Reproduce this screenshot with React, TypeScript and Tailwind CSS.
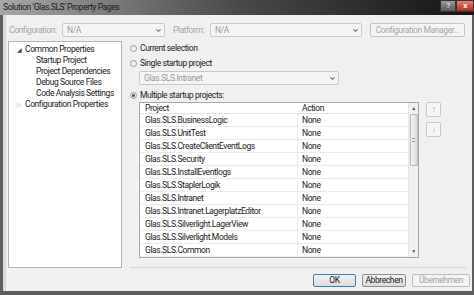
import { ChevronDown } from 'lucide-react'

const projects = [
  'Glas.SLS.BusinessLogic',
  'Glas.SLS.UnitTest',
  'Glas.SLS.CreateClientEventLogs',
  'Glas.SLS.Security',
  'Glas.SLS.InstallEventlogs',
  'Glas.SLS.StaplerLogik',
  'Glas.SLS.Intranet',
  'Glas.SLS.Intranet.LagerplatzEditor',
  'Glas.SLS.Silverlight.LagerView',
  'Glas.SLS.Silverlight.Models',
  'Glas.SLS.Common',
]

function Combo({ value, className }: { value: string; className: string }) {
  return (
    <div className={`flex items-center justify-between border border-[#c9c9c9] bg-[#f4f4f4] rounded-[2px] pl-[4px] pr-[2px] text-[#9a9a9a] ${className}`}>
      <span>{value}</span>
      <ChevronDown className="w-[7px] h-[7px] text-[#777]" strokeWidth={4} />
    </div>
  )
}

function Radio({ checked, label }: { checked?: boolean; label: string }) {
  return (
    <div className="flex items-center gap-[3px] text-[#1a1a1a]">
      <span className="w-[7px] h-[7px] rounded-full border border-[#9a9a9a] bg-gradient-to-b from-[#e6e6e6] to-[#fafafa] flex items-center justify-center">
        {checked && <span className="w-[3px] h-[3px] rounded-full bg-[#2d4f7a]" />}
      </span>
      <span>{label}</span>
    </div>
  )
}

export default function App() {
  return (
    <div className="w-[474px] h-[295px] bg-[#5e5e5e] flex flex-col overflow-hidden text-[8.5px] leading-none tracking-[-0.4px] whitespace-nowrap" style={{ fontFamily: 'Roboto, "Noto Sans", sans-serif' }}>
      {/* title bar */}
      <div className="h-[15px] flex items-center bg-gradient-to-r from-[#a8a8a8] via-[#4a4a4a] to-[#151515] relative shrink-0">
        <span className="pl-[3px] text-[#1a1a1a]">Solution 'Glas.SLS' Property Pages</span>
        <div className="absolute right-0 top-0 flex">
          <div className="w-[16px] h-[12px] bg-gradient-to-b from-[#9a9a9a] to-[#5a5a5a] border border-[#333] text-white text-[8px] flex items-center justify-center">?</div>
          <div className="w-[18px] h-[12px] bg-gradient-to-b from-[#e08070] to-[#b02a1a] border border-[#333] text-white text-[8px] font-bold flex items-center justify-center">x</div>
        </div>
      </div>

      {/* body */}
      <div className="flex-1 ml-[3px] mr-[2px] mb-[4px] border-l-[3px] border-[#d9d9d9] bg-[#f0f0f0] flex flex-col">
        <div className="flex items-center h-[14px] mt-[8px] pl-[3px] text-[#a6a6a6]">
          <span className="w-[53px]">Configuration:</span>
          <Combo value="N/A" className="w-[103px] h-[14px]" />
          <span className="ml-[8px] w-[37px]">Platform:</span>
          <Combo value="N/A" className="w-[152px] h-[14px]" />
          <div className="ml-[8px] w-[95px] h-[14px] border border-[#c5c5c5] rounded-[2px] bg-[#f4f4f4] flex items-center justify-center">Configuration Manager...</div>
        </div>

        <div className="flex mt-[4px] h-[227px] pl-[2px]">
          {/* tree */}
          <div className="w-[114px] bg-white border border-[#b5b5b5] pt-[2px] text-[#1a1a1a]">
            <div className="flex items-center h-[11px] pl-[8px]">
              <span className="text-[6px] w-[8px] text-[#444]">◢</span>
              <span>Common Properties</span>
            </div>
            {['Startup Project', 'Project Dependencies', 'Debug Source Files', 'Code Analysis Settings'].map(t => (
              <div key={t} className="flex items-center h-[11px] pl-[27px]">{t}</div>
            ))}
            <div className="flex items-center h-[11px] pl-[8px]">
              <span className="text-[6px] w-[8px] text-[#999]">▷</span>
              <span>Configuration Properties</span>
            </div>
          </div>

          {/* right */}
          <div className="flex-1 ml-[8px] mr-[6px] border-b border-[#d4d4d4] flex flex-col">
            <div className="pt-[2px] flex flex-col">
              <div className="h-[11px] flex items-center"><Radio label="Current selection" /></div>
              <div className="h-[11px] mt-[4px] flex items-center"><Radio label="Single startup project" /></div>
              <Combo value="Glas.SLS.Intranet" className="ml-[9px] mt-[2px] w-[200px] h-[14px]" />
              <div className="h-[11px] mt-[5px] flex items-center"><Radio checked label="Multiple startup projects:" /></div>
            </div>
            <div className="flex mt-[1px]">
              <div className="ml-[9px] w-[280px] h-[156px] bg-white border border-[#a8a8a8] flex overflow-hidden">
                <div className="flex-1 flex flex-col">
                  <div className="flex h-[13px] items-center border-b border-[#e2e2e2] text-[#1a1a1a]">
                    <span className="w-[158px] pl-[5px]">Project</span>
                    <span className="pl-[4px]">Action</span>
                  </div>
                  {projects.map(p => (
                    <div key={p} className="flex h-[13px] shrink-0 items-center border-b border-[#ececec] text-[#1a1a1a]">
                      <span className="w-[158px] pl-[5px] h-full flex items-center border-r border-[#ececec] overflow-hidden">{p}</span>
                      <span className="pl-[4px]">None</span>
                    </div>
                  ))}
                </div>
                <div className="w-[10px] bg-[#f0f0f0] border-l border-[#e4e4e4] flex flex-col items-center">
                  <span className="text-[5px] text-[#555] h-[11px] flex items-center">▲</span>
                  <div className="w-[8px] h-[52px] bg-gradient-to-r from-[#f4f4f4] to-[#dcdcdc] border border-[#b8b8b8] rounded-[1px] flex items-center justify-center">
                    <span className="w-[3px] h-[4px] border-y border-[#999]" />
                  </div>
                  <div className="flex-1" />
                  <span className="text-[5px] text-[#555] h-[11px] flex items-center">▼</span>
                </div>
              </div>
              <div className="ml-[7px] flex flex-col gap-[5px]">
                <div className="w-[15px] h-[15px] border border-[#c8c8c8] rounded-[2px] bg-[#f6f6f6] text-[#a0a0a0] text-[8px] flex items-center justify-center">↑</div>
                <div className="w-[15px] h-[15px] border border-[#c8c8c8] rounded-[2px] bg-[#f6f6f6] text-[#a0a0a0] text-[8px] flex items-center justify-center">↓</div>
              </div>
            </div>
          </div>
        </div>

        <div className="flex justify-end gap-[6px] mt-[6px] pr-[2px]">
          <div className="w-[43px] h-[13px] border border-[#3c7fb1] rounded-[2px] bg-gradient-to-b from-[#f2f2f2] to-[#dcdcdc] text-[#1a1a1a] flex items-center justify-center">OK</div>
          <div className="w-[44px] h-[13px] border border-[#8e8e8e] rounded-[2px] bg-gradient-to-b from-[#f2f2f2] to-[#dcdcdc] text-[#1a1a1a] flex items-center justify-center">Abbrechen</div>
          <div className="w-[58px] h-[13px] border border-[#bdbdbd] rounded-[2px] bg-[#f4f4f4] text-[#a0a0a0] flex items-center justify-center">Übernehmen</div>
        </div>
      </div>
    </div>
  )
}
